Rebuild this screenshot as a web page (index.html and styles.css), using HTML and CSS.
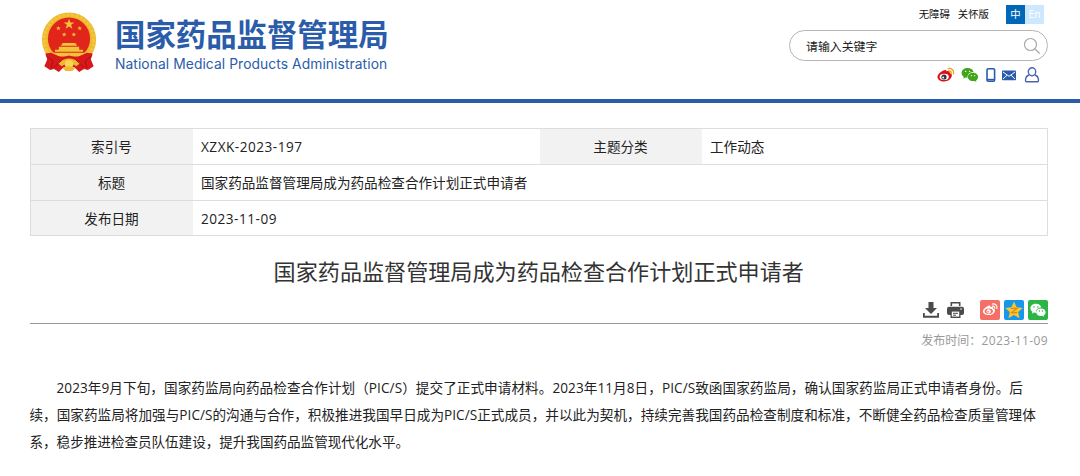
FILE: index.html
```html
<!DOCTYPE html>
<html lang="zh-CN">
<head>
<meta charset="utf-8">
<title>国家药品监督管理局</title>
<link rel="stylesheet" href="styles.css">
</head>
<body>
<header class="header">
  <div class="brand">
    <svg class="emblem" viewBox="0 0 58 62">
      <circle cx="28.5" cy="28.5" r="28" fill="#eeb92b"/>
      <circle cx="28.5" cy="28.5" r="25.5" fill="none" stroke="#f3c63f" stroke-width="3" stroke-dasharray="3 1.5"/>
      <circle cx="28.5" cy="27.5" r="21.8" fill="#e1251b"/>
      <path fill="#f2c23a" d="M28.500 7l1.400 3.900h4.100l-3.300 2.400 1.200 3.900-3.400-2.300-3.400 2.300 1.200-3.900-3.300-2.400h4.100z"/>
      <g fill="#f2c23a">
        <path d="M17.500 14.500l.6 1.600h1.800l-1.400 1.100.5 1.700-1.500-1-1.500 1 .5-1.700-1.400-1.100h1.800z"/>
        <path d="M39.500 14.500l.6 1.600h1.800l-1.400 1.100.5 1.700-1.500-1-1.500 1 .5-1.700-1.400-1.100h1.800z"/>
        <path d="M23.500 21l.6 1.600h1.800l-1.400 1.100.5 1.700-1.500-1-1.500 1 .5-1.700-1.400-1.100h1.800z"/>
        <path d="M33.500 21l.6 1.600h1.800l-1.400 1.100.5 1.700-1.500-1-1.500 1 .5-1.700-1.400-1.100h1.800z"/>
        <path d="M22 32h13l2 3H20zM18 36h21v3h4v2H14v-2h4zM9 42h39l-3 4H12z"/>
      </g>
      <path d="M4 43l6-1 11 5 7.500-2 7.500 2 11-5 6 1-2 6 3 7-6 4-4-1-5 3-5-5H23l-5 5-5-3-4 1-6-4 3-7z" fill="#d7191c"/>
      <path d="M17 53q11.500-10 23 0l-4 3q-7.500-6-15 0z" fill="#eeb92b"/>
      <circle cx="28.500" cy="54" r="4.500" fill="#f8d558"/>
      <path d="M22 58q6.500-4 13 0l-3 3h-7z" fill="#eeb92b"/>
      <path d="M5 45l7 6-2 7M52 45l-7 6 2 7M13 57l8-7M44 57l-8-7" fill="none" stroke="#a90d12"/>
    </svg>
    <div class="brand-names">
      <div class="brand-cn">国家药品监督管理局</div>
      <div class="brand-en">National Medical Products Administration</div>
    </div>
  </div>
  <div class="tools">
    <div class="links">
      <a>无障碍</a><a class="care">关怀版</a>
      <span class="lang"><b class="lang-on">中</b><b class="lang-off">En</b></span>
    </div>
    <div class="search">
      <span>请输入关键字</span>
      <svg width="18" height="18" viewBox="0 0 18 18" fill="none" stroke="#a9a9a9" stroke-width="1.200"><circle cx="7.500" cy="7.500" r="6"/><path d="M11.700 11.800l5 4.700"/></svg>
    </div>
    <div class="social">
      <svg width="18" height="16" viewBox="0 0 18 16"><path d="M6.500 3.500c1.600-1 3-.6 2.700.8 2-.8 4-.5 3.500 1.600 1.700.5 2.600 1.700 2 3.600-1 3.200-4 4.900-7.600 4.900C3.300 14.400.5 12.600.5 9.900.5 7.500 3.500 4.700 6.500 3.500z" fill="#dc0e18"/><ellipse cx="7.200" cy="9.900" rx="4.600" ry="3.100" fill="#fff"/><circle cx="7" cy="10" r="2.600" fill="#333"/><circle cx="6.200" cy="10.600" r="1" fill="#fff"/><path d="M11.300 1.500c3.500-.6 6 1.900 5.200 5.200M11.600 3.900c1.700-.3 2.900.8 2.600 2.400" fill="none" stroke="#f4a51c" stroke-width="1.400" stroke-linecap="round"/></svg>
      <svg width="18" height="16" viewBox="0 0 18 16"><path d="M6.700 1C3.200 1 .6 3.100.6 5.900c0 1.600.8 2.900 2.200 3.800l-.5 2 2.200-1.200 2 .3C6.200 7.300 8.700 5 12.500 5 12 2.600 9.600 1 6.700 1z" fill="#3fa51b"/><path d="M12 5.700c-2.900 0-5.100 1.900-5.100 4.200s2.200 4.200 5.100 4.200l1.600-.2 1.900 1-.4-1.700c1.300-.8 2-1.900 2-3.300 0-2.300-2.200-4.200-5.100-4.200z" fill="#3fa51b"/><g fill="#fff"><circle cx="4.600" cy="4.400" r=".7"/><circle cx="8.600" cy="4.400" r=".7"/><circle cx="10.400" cy="8.700" r=".6"/><circle cx="13.700" cy="8.700" r=".6"/></g></svg>
      <svg width="10" height="16" viewBox="0 0 10 16"><rect x="1" y="1.800" width="7.600" height="12.400" rx="1.200" fill="#fff" stroke="#2a5caa" stroke-width="1.600"/><path d="M1 12.600h7.500" stroke="#2a5caa" stroke-width="1.600"/></svg>
      <svg width="14" height="16" viewBox="0 0 14 16"><rect y="3.500" width="14" height="9.800" rx=".8" fill="#2a5caa"/><path d="M1 5l6 4.300L13 5M1 12l4-3.800M13 12L9 8.200" fill="none" stroke="#fff"/></svg>
      <svg width="16" height="16" viewBox="0 0 16 16" fill="none" stroke="#4b64b0" stroke-width="1.400"><ellipse cx="8" cy="4.800" rx="3.700" ry="4"/><path d="M5.200 8C3 8.600 1.500 11 1.500 13.500c0 .9.300 1.200 1 1.200h11c.7 0 1-.3 1-1.200 0-2.500-1.500-4.900-3.700-5.500"/></svg>
    </div>
  </div>
</header>
<main class="page">
  <div class="info">
    <div class="key">索引号</div><div class="val num">XZXK-2023-197</div><div class="key">主题分类</div><div class="val">工作动态</div>
    <div class="key">标题</div><div class="val wide">国家药品监督管理局成为药品检查合作计划正式申请者</div>
    <div class="key">发布日期</div><div class="val wide num">2023-11-09</div>
  </div>
  <h1 class="title">国家药品监督管理局成为药品检查合作计划正式申请者</h1>
  <div class="actions">
    <svg class="dl" width="16" height="16" viewBox="0 0 16 16" fill="#4b4b4b"><path d="M5.500 0h5v6H14L8 12 2 6h3.500z"/><path d="M0 11h1.800v2.800h12.400V11H16v4.800H0z"/></svg>
    <svg class="pr" width="17" height="16" viewBox="0 0 17 16"><path d="M3.500 0h10v4h-1.600V1.500H5.100V4H3.500z" fill="#4b4b4b"/><rect y="4.700" width="17" height="8.300" rx="2" fill="#4b4b4b"/><path d="M3.500 8.500h10V16h-10z" fill="#4b4b4b"/><path d="M4.800 9.600h7.400v5H4.800z" fill="#fff"/><path d="M6 11.300h5M6 13.200h3" stroke="#4b4b4b"/><circle cx="14" cy="7" r=".8" fill="#fff"/></svg>
    <svg class="sh" width="20" height="20" viewBox="0 0 20 20"><rect width="20" height="20" rx="2" fill="#f56f66"/><path d="M8 6c1.500-.8 2.500-.3 2.200 1 2-.6 3.300-.1 2.900 1.500 1.500.5 2.200 1.500 1.700 2.900-.8 2.400-3.300 3.700-6.300 3.700S3 13.700 3 11.500 5.700 7 8 6z" fill="#fff"/><ellipse cx="8.800" cy="11.300" rx="4.100" ry="2.800" fill="#f56f66"/><circle cx="8.600" cy="11.400" r="2.200" fill="#fff"/><circle cx="8" cy="11.900" r=".8" fill="#f56f66"/><path d="M12.300 4c3-.5 5.200 1.500 4.600 4.500M12.500 6.100c1.400-.2 2.400.6 2.200 2" fill="none" stroke="#fff" stroke-width="1.200" stroke-linecap="round"/></svg>
    <svg class="sh" width="20" height="20" viewBox="0 0 20 20"><rect width="20" height="20" rx="2" fill="#1598ec"/><path d="M10 1.500l2.600 5.700 6.200.7-4.600 4.200 1.300 6.100-5.500-3.100-5.500 3.100 1.300-6.100L1.200 7.900l6.200-.7z" fill="#fdc42c"/><path d="M7 8.300h6l-5.300 4.300q2.800.6 5.500-.2" fill="none" stroke="#d98a16" stroke-width="1.200"/></svg>
    <svg class="sh" width="20" height="20" viewBox="0 0 20 20"><rect width="20" height="20" rx="2" fill="#2bb545"/><path d="M8 3.700c-3.200 0-5.600 2-5.600 4.600 0 1.500.8 2.700 2 3.600L3.900 13.700l2-1.100 2 .3c-.3-3 2-5.300 5.500-5.300C12.900 5.300 10.700 3.700 8 3.700z" fill="#fff"/><path d="M12.900 8.400c-2.700 0-4.700 1.700-4.700 3.800S10.200 16 12.900 16l1.500-.2 1.700 1-.4-1.500c1.200-.8 1.900-1.800 1.900-3.100 0-2.100-2-3.800-4.700-3.800z" fill="#fff"/><g fill="#2bb545"><circle cx="6.100" cy="7" r=".8"/><circle cx="9.800" cy="7" r=".8"/><circle cx="11.400" cy="11" r=".7"/><circle cx="14.400" cy="11" r=".7"/></g></svg>
  </div>
  <div class="date">发布时间：<span class="date-num">2023-11-09</span></div>
  <article class="body">
    <div class="line first">2023年9月下旬，国家药监局向药品检查合作计划（PIC/S）提交了正式申请材料。2023年11月8日，PIC/S致函国家药监局，确认国家药监局正式申请者身份。后</div>
    <div class="line second">续，国家药监局将加强与PIC/S的沟通与合作，积极推进我国早日成为PIC/S正式成员，并以此为契机，持续完善我国药品检查制度和标准，不断健全药品检查质量管理体</div>
    <div class="line third">系，稳步推进检查员队伍建设，提升我国药品监管现代化水平。</div>
  </article>
</main>
</body>
</html>
```
FILE: styles.css
```css
* { box-sizing: border-box; }
body {
  margin: 0;
  background: #fff;
  color: #222;
  font-family: "Open Sans", "Noto Sans CJK SC", sans-serif;
  font-size: 13.6px;
}
svg { display: block; flex: none; }
.header {
  display: flex;
  justify-content: space-between;
  height: 103px;
  padding: 0 32px 0 41px;
  border-bottom: 4px solid #2a5caa;
}
.brand { display: flex; padding-top: 12px; }
.emblem { width: 57px; height: 60px; }
.brand-names { margin-left: 17px; white-space: nowrap; color: #2a5caa; }
.brand-cn { margin-top: 2px; height: 41px; line-height: 42px; font-size: 30.4px; font-weight: 700; }
.brand-en { height: 18px; line-height: 18px; font-family: Inter, sans-serif; font-size: 13.8px; font-weight: 400; letter-spacing: .09px; }
.tools { width: 259px; }
.links {
  display: flex;
  justify-content: flex-end;
  padding: 5px 4px 0 0;
  height: 30px;
  line-height: 19px;
  font-size: 10.4px;
  color: #111;
}
.care { margin-left: 8px; }
.lang { display: flex; margin-left: 17px; height: 19px; text-align: center; }
.lang b { width: 19px; font-weight: 400; color: #fff; }
.lang-on { background: #0068b7; }
.lang-off { background: #cce8ff; }
.search {
  display: flex;
  align-items: center;
  justify-content: space-between;
  height: 31px;
  padding: 0 6px 0 16px;
  border: 1px solid #b5b5b5;
  border-radius: 16px;
  font-size: 11.9px;
}
.social { display: flex; justify-content: flex-end; align-items: center; gap: 6px; height: 16px; margin-top: 6px; padding-right: 8px; }
.social svg:nth-child(2) { margin-right: 1px; }
.social svg:nth-child(5) { margin-left: 2px; }
.page { padding: 25px 32px 0 29.500px; }
.info {
  display: grid;
  grid-template-columns: 162px 347px 162px 1fr;
  grid-template-rows: 36px 35.500px 35.500px;
  border: 1px solid #ddd;
  border-bottom: 0;
  line-height: 35px;
}
.key { background: #f2f2f2; text-align: center; border-bottom: 1px solid #ddd; }
.val { padding-left: 8.500px; border-bottom: 1px solid #ddd; }
.num { letter-spacing: .5px; }
.wide { grid-column: 2 / -1; }
.title { margin: 18px 0 0; height: 34px; line-height: 34px; text-align: center; font-size: 22.1px; font-weight: 400; color: #333; white-space: nowrap; }
.actions { display: flex; justify-content: flex-end; align-items: center; height: 36px; padding-top: 8px; border-bottom: 1px solid #999; }
.pr { margin: 0 16px 0 8px; }
.sh + .sh { margin-left: 4px; }
.date { height: 32px; line-height: 33px; text-align: right; font-size: 12px; color: #999; }
.date-num { letter-spacing: .4px; }
.body { margin-top: 18px; }
.line { height: 27.2px; line-height: 27.2px; white-space: nowrap; }
.first { padding-left: 27px; letter-spacing: .065px; }
.second { letter-spacing: .03px; }
.third { letter-spacing: -.04px; }
```
